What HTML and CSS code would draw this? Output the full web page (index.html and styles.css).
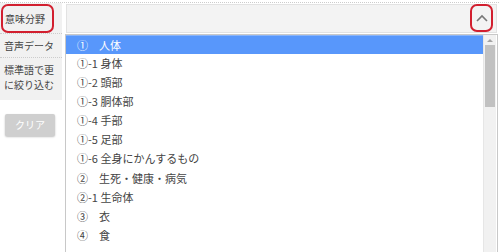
FILE: index.html
```html
<!DOCTYPE html>
<html lang="ja">
<head>
  <meta charset="UTF-8" />
  <title>検索条件</title>
  <link rel="stylesheet" href="styles.css">
</head>
<body>

<div class="form">
  <div class="labels">
    <div class="row row-first"><span class="mark label-mark">意味分野</span></div>
    <div class="row row-second">音声データ</div>
    <div class="row row-third">標準語で更<br>に絞り込む</div>
  </div>
  <div class="fields">
    <div class="select">
      <span class="mark caret-mark">
        <svg width="12" height="8" viewBox="0 0 12 8"><polyline points="1,7 6,2 11,7" fill="none" stroke="#777" stroke-width="1.6"/></svg>
      </span>
    </div>
  </div>
</div>

<div class="actions">
  <button class="clear">クリア</button>
</div>

<!-- opened dropdown -->
<div class="dropdown">
  <ul class="options">
    <li class="active">①　人体</li>
    <li>①-1 身体</li>
    <li>①-2 頭部</li>
    <li>①-3 胴体部</li>
    <li>①-4 手部</li>
    <li>①-5 足部</li>
    <li>①-6 全身にかんするもの</li>
    <li>②　生死・健康・病気</li>
    <li>②-1 生命体</li>
    <li>③　衣</li>
    <li>④　食</li>
  </ul>
  <div class="scrollbar">
    <div class="arrow"></div>
    <div class="thumb"></div>
  </div>
</div>

</body>
</html>
```

FILE: styles.css
```css
body {
  margin: 0;
  font-family: "Noto Sans CJK JP", "Noto Sans", sans-serif;
  color: #444;
  background: #fff;
  position: relative;
  height: 252px;
  overflow: hidden;
}
.form {
  display: flex;
  border-top: 1px dotted #ccc;
  margin-top: 2px;
}
.labels {
  width: 62px;
  background: #f1f1f1;
  font-size: 10px;
}
.row {
  border-bottom: 1px dotted #ccc;
  padding: 0 4px;
}
.row-first {
  height: 30px;
  display: flex;
  align-items: center;
  padding: 0 1px;
}
.row-second {
  height: 23px;
  line-height: 23px;
}
.row-third {
  height: 37px;
  line-height: 14.5px;
  padding-top: 5px;
  border-bottom: none;
}
.mark {
  border: 2px solid #d21f2f;
  border-radius: 7px;
  box-sizing: border-box;
}
.label-mark {
  display: flex;
  align-items: center;
  width: 53px;
  height: 29px;
  padding-left: 2px;
}
.fields {
  flex: 1;
  padding: 1px 2px 0 4px;
}
.select {
  height: 27px;
  background: #f3f3f3;
  border: 1px solid #e2e2e2;
  display: flex;
  justify-content: flex-end;
  align-items: center;
  padding-right: 3px;
}
.caret-mark {
  width: 23px;
  height: 28px;
  display: flex;
  align-items: center;
  justify-content: center;
  margin-top: -1px;
}
.actions {
  width: 62px;
  padding-top: 10px;
}
.clear {
  margin-left: 5px;
  width: 50px;
  height: 22px;
  border: none;
  border-radius: 2px;
  background: #cfcfcf;
  color: #fff;
  font-family: inherit;
  font-size: 10px;
  box-shadow: 0 1px 2px rgba(0,0,0,0.25);
}
.dropdown {
  position: absolute;
  top: 34px;
  left: 65px;
  width: 431px;
  height: 240px;
  background: #fff;
  border: 1px solid #c8c8c8;
  display: flex;
}
.options {
  list-style: none;
  margin: 0;
  padding: 0;
  flex: 1;
  font-size: 11px;
}
.options li {
  height: 19.2px;
  line-height: 19px;
  padding-left: 11px;
}
.options li.active {
  background: #5897fb;
  color: #fff;
  border-top: 1px solid #8ab4f8;
  height: 17.5px;
  line-height: 18px;
}
.scrollbar {
  width: 12px;
  background: #f1f1f1;
  border-left: 1px solid #e6e6e6;
  margin-right: 1px;
}
.arrow {
  width: 0;
  height: 0;
  margin: 4px auto 3px;
  border-left: 3px solid transparent;
  border-right: 3px solid transparent;
  border-bottom: 3px solid #a3a3a3;
}
.thumb {
  margin: 0 1px;
  height: 62px;
  background: #c1c1c1;
}
```
